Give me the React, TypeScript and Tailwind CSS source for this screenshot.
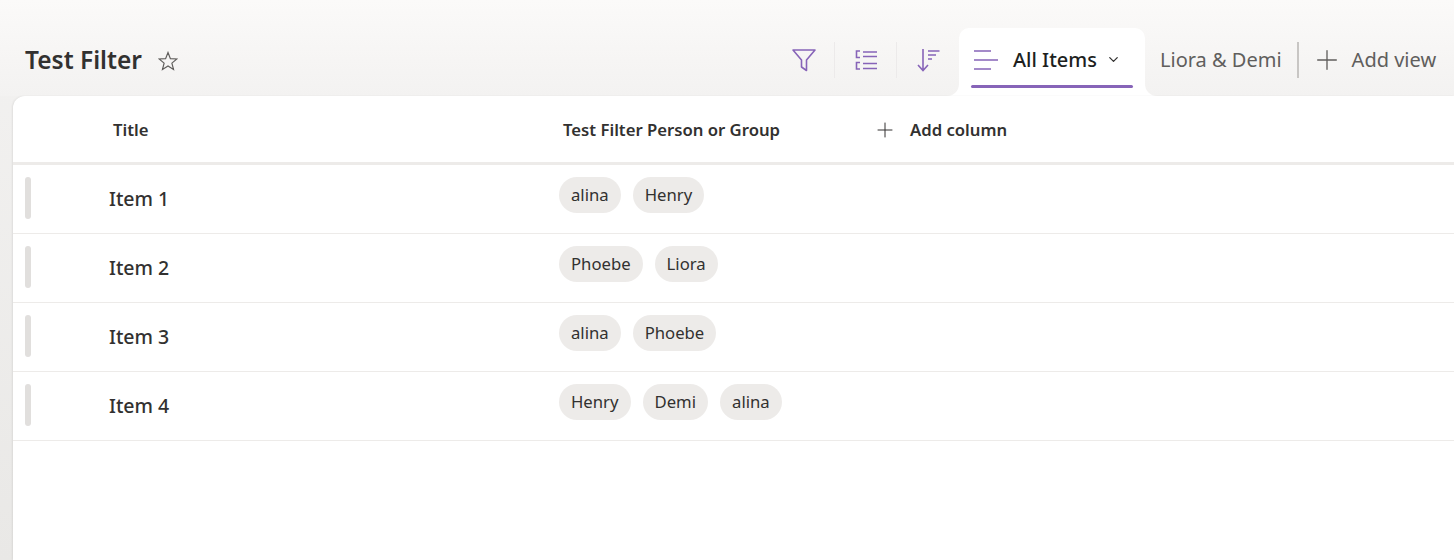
import React from "react";
import { Plus, ChevronDown } from "lucide-react";

const font = "font-['Noto_Sans','Open_Sans',sans-serif]";
const headBg = "bg-[linear-gradient(180deg,#fbfaf9_0%,#f3f2f1_100%)]";

const rows = [
  { title: "Item 1", people: ["alina", "Henry"] },
  { title: "Item 2", people: ["Phoebe", "Liora"] },
  { title: "Item 3", people: ["alina", "Phoebe"] },
  { title: "Item 4", people: ["Henry", "Demi", "alina"] },
];

function Divider() {
  return <div className="w-px h-[36px] bg-[#eceaea]" />;
}

function StarIcon() {
  return (
    <svg width="20" height="20" viewBox="0 0 20 20" fill="none" stroke="#605e5c" strokeWidth="1.2">
      <path d="M10 1.5L12.4 7.6L18.9 8L13.9 12.1L15.5 18.4L10 14.9L4.5 18.4L6.1 12.1L1.1 8L7.6 7.6Z" />
    </svg>
  );
}

function FilterIcon() {
  return (
    <svg width="26" height="26" viewBox="0 0 26 26" fill="none" stroke="#8764b8" strokeWidth="1.6" strokeLinejoin="round">
      <path d="M2 3h22l-8.5 10v10.5l-5-3.5v-7z" />
    </svg>
  );
}

function ListIcon() {
  return (
    <svg width="24" height="22" viewBox="0 0 24 22" fill="none" stroke="#8764b8" strokeWidth="1.6">
      <path d="M6 2H2.5v6.5H6M6 13.500H2.5v6.5H6M9 3h14M9 7.5h14M9 14.5h14M9 19.5h14" />
    </svg>
  );
}

function SortIcon() {
  return (
    <svg width="24" height="24" viewBox="0 0 24 24" fill="none" stroke="#8764b8" strokeWidth="1.6">
      <path d="M6 1v21M1 17l5 5.5 5-5.5M11 3h11.5M11 7h8M11 11h4" />
    </svg>
  );
}

function LinesIcon() {
  return (
    <svg width="26" height="22" viewBox="0 0 26 22" fill="none" stroke="#8764b8" strokeWidth="1.5">
      <path d="M1 2h17M1 11h24M1 20h17" />
    </svg>
  );
}

function Pill({ name }: { name: string }) {
  return (
    <span className="h-[36px] px-3 flex items-center rounded-[18px] bg-[#edebe9] text-[16.7px] text-[#323130]">
      {name}
    </span>
  );
}

export default function App() {
  return (
    <div className={`${font} h-[560px] w-full overflow-hidden flex flex-col bg-[linear-gradient(180deg,#f3f2f1_0%,#e9e8e6_100%)]`}>
      <header className="h-[96px] flex shrink-0 bg-white">
        {/* left part: title and toolbar */}
        <div className={`flex-1 flex items-center rounded-br-[12px] ${headBg} pl-[25px] pr-[18px] pt-[28px]`}>
          <h1 className="text-[24.5px] font-semibold text-[#323130] leading-none -mt-[4px]">Test Filter</h1>
          <div className="ml-[16px] -mt-[3px]"><StarIcon /></div>
          <div className="ml-auto flex items-center -mt-[4px]">
            <FilterIcon />
            <div className="ml-[17px]"><Divider /></div>
            <div className="ml-[19px]"><ListIcon /></div>
            <div className="ml-[18px]"><Divider /></div>
            <div className="ml-[20px]"><SortIcon /></div>
          </div>
        </div>

        {/* current view tab */}
        <div className={`w-[186px] ${headBg} pt-[28px]`}>
          <div className="h-[68px] bg-white rounded-t-[10px] px-[12px] flex flex-col">
            <div className="h-[57px] flex items-center pl-[2px] pt-[6px]">
              <LinesIcon />
              <span className="ml-[14px] text-[20px] font-medium text-[#201f1e] leading-none">All Items</span>
              <ChevronDown className="ml-[9px] text-[#323130]" size={15} />
            </div>
            <div className="h-[3px] rounded-full bg-[#8764b8]" />
          </div>
        </div>

        {/* other views */}
        <div className={`w-[309px] flex items-center rounded-bl-[12px] ${headBg} pl-[15px] pt-[28px]`}>
          <span className="text-[20px] text-[#605e5c] leading-none -mt-[4px]">Liora &amp; Demi</span>
          <div className="ml-[15px] w-[2px] h-[36px] bg-[#c8c6c4] -mt-[4px]" />
          <Plus className="ml-[12px] -mt-[4px] text-[#605e5c]" size={32} strokeWidth={1} />
          <span className="ml-[9px] text-[20px] text-[#605e5c] leading-none -mt-[4px]">Add view</span>
        </div>
      </header>

      {/* list */}
      <main className="flex-1 ml-[13px] bg-white rounded-tl-[12px] shadow-[-1px_0_2px_rgba(0,0,0,0.07)]">
        <div className="h-[69px] flex items-center border-b-[3px] border-[#edebe9] pt-[2px] text-[16.7px] font-semibold text-[#323130]">
          <div className="w-[550px] pl-[100px]">Title</div>
          <div className="w-[315px]">Test Filter Person or Group</div>
          <div className="flex items-center">
            <Plus className="-ml-[5px]" size={24} strokeWidth={1} />
            <span className="ml-[13px]">Add column</span>
          </div>
        </div>
        {rows.map((row) => (
          <div key={row.title} className="h-[69px] flex border-b border-[#edebe9] pt-[12px]">
            <div className="ml-[12px] w-[6px] h-[42px] rounded-[3px] bg-[#e1dfdd]" />
            <div className="w-[528px] pl-[78px] pt-[9px] text-[19.5px] font-medium text-[#323130] leading-[26px]">{row.title}</div>
            <div className="flex gap-[12px]">
              {row.people.map((p) => (
                <Pill key={p} name={p} />
              ))}
            </div>
          </div>
        ))}
      </main>
    </div>
  );
}
